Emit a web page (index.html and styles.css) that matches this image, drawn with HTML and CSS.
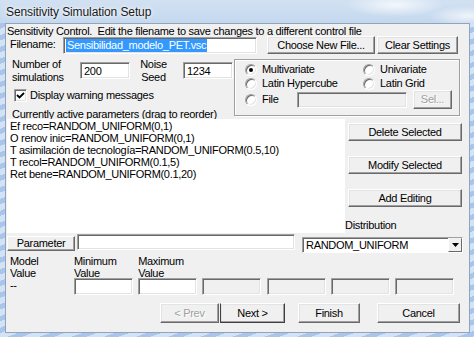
FILE: index.html
```html
<!DOCTYPE html>
<html lang="en">
<head>
  <meta charset="UTF-8" />
  <link rel="stylesheet" href="styles.css">
</head>
<body>

<div class="window">
  <div class="titlebar">Sensitivity Simulation Setup</div>

  <div class="client">

    <!-- File header -->
    <div class="intro">Sensitivity Control.&nbsp; Edit the filename to save changes to a different control file</div>
    <div class="file-row">
      <span class="file-label">Filename:</span>
      <div class="edit file-edit"><span class="selected">Sensibilidad_modelo_PET.vsc</span></div>
      <button class="btn choose-btn">Choose New File...</button>
      <button class="btn clear-btn">Clear Settings</button>
    </div>

    <!-- Simulation options -->
    <div class="options">
      <div class="options-left">
        <div class="sim-row">
          <span class="sim-label">Number of<br>simulations</span>
          <div class="edit num-edit">200</div>
          <span class="seed-label">Noise<br>Seed</span>
          <div class="edit num-edit">1234</div>
        </div>
        <div class="check-row">
          <span class="checkbox">
            <svg width="9" height="9" viewBox="0 0 9 9"><path d="M1 4 L3.5 6.5 L8 2" fill="none" stroke="#000" stroke-width="1.8"/></svg>
          </span>
          Display warning messages
        </div>
        <div class="list-caption">Currently active parameters (drag to reorder)</div>
      </div>

      <div class="method-group">
        <div class="radio-row">
          <span class="radio-item first-col"><span class="radio checked"></span>Multivariate</span>
          <span class="radio-item"><span class="radio"></span>Univariate</span>
        </div>
        <div class="radio-row">
          <span class="radio-item first-col"><span class="radio"></span>Latin Hypercube</span>
          <span class="radio-item"><span class="radio"></span>Latin Grid</span>
        </div>
        <div class="radio-row file-radio">
          <span class="radio-item file-item"><span class="radio"></span>File</span>
          <div class="edit disabled method-file"></div>
          <button class="btn sel-btn" disabled>Sel...</button>
        </div>
      </div>
    </div>

    <!-- Parameter list -->
    <div class="list-area">
      <div class="listbox">
        <div>Ef reco=RANDOM_UNIFORM(0,1)</div>
        <div>O renov inic=RANDOM_UNIFORM(0,1)</div>
        <div>T asimilación de tecnología=RANDOM_UNIFORM(0.5,10)</div>
        <div>T recol=RANDOM_UNIFORM(0.1,5)</div>
        <div>Ret bene=RANDOM_UNIFORM(0.1,20)</div>
      </div>
      <div class="list-actions">
        <button class="btn action-btn">Delete Selected</button>
        <button class="btn action-btn">Modify Selected</button>
        <button class="btn action-btn">Add Editing</button>
        <div class="dist-label">Distribution</div>
      </div>
    </div>

    <!-- Editing row -->
    <div class="param-row">
      <div class="header-btn">Parameter</div>
      <div class="edit param-edit"></div>
      <div class="combo">
        <span class="combo-text">RANDOM_UNIFORM</span>
        <span class="combo-arrow">
          <svg width="7" height="4" viewBox="0 0 7 4"><path d="M0 0 H7 L3.5 4 Z" fill="#000"/></svg>
        </span>
      </div>
    </div>

    <div class="values">
      <div class="val-label">Model<br>Value</div>
      <div class="val-label">Minimum<br>Value</div>
      <div class="val-label">Maximum<br>Value</div>
      <div></div><div></div><div></div><div></div>
      <div class="val-dash">--</div>
      <div class="edit val-edit"></div>
      <div class="edit val-edit"></div>
      <div class="edit val-edit disabled"></div>
      <div class="edit val-edit disabled"></div>
      <div class="edit val-edit disabled"></div>
      <div class="edit val-edit disabled"></div>
    </div>

    <!-- Wizard buttons -->
    <div class="nav">
      <button class="btn nav-btn prev-btn" disabled>&lt; Prev</button>
      <button class="btn nav-btn next-btn">Next &gt;</button>
      <button class="btn nav-btn finish-btn">Finish</button>
      <button class="btn nav-btn cancel-btn">Cancel</button>
    </div>

  </div>
</div>

</body>
</html>
```

FILE: styles.css
```css
/* Page setup */
html, body {
  margin: 0;
  padding: 0;
  font-family: "Liberation Sans", Arial, sans-serif;
  font-size: 11px;
  letter-spacing: -0.3px;
  color: #000;
}

/* Aero window frame */
.window {
  width: 474px;
  height: 337px;
  box-sizing: border-box;
  padding: 0 4px 4px 5px;
  display: flex;
  flex-direction: column;
  background:
    repeating-linear-gradient(160deg, #a9c6ea 0 5px, #d3e2f4 5px 11px);
}

.titlebar {
  height: 23px;
  box-sizing: border-box;
  margin: 0 -4px 0 -5px;
  padding: 5px 0 0 6px;
  font-size: 12px;
  line-height: 14px;
  letter-spacing: -0.1px;
  color: #1a1a1a;
  text-shadow: 0 0 6px #fff, 0 0 3px #fff;
  background:
    radial-gradient(ellipse 50px 12px at 395px 5px, rgba(255,255,255,0.75), rgba(255,255,255,0)),
    radial-gradient(ellipse 40px 10px at 468px 16px, rgba(255,255,255,0.7), rgba(255,255,255,0)),
    linear-gradient(180deg, #d2e1f2, #c4d8ee);
}

.client {
  flex: 1;
  background: #f0f0f0;
  border: 1px solid #8fa4bd;
  display: flex;
  flex-direction: column;
}

/* Classic controls */
.edit {
  box-sizing: border-box;
  background: #fff;
  border: 1px solid;
  border-color: #a0a0a0 #fff #fff #a0a0a0;
  box-shadow: inset 1px 1px #696969, inset -1px -1px #e3e3e3;
  padding: 1px 0 0 3px;
  line-height: 15px;
}

.edit.disabled {
  background: #f0f0f0;
}

.btn {
  box-sizing: border-box;
  font: inherit;
  letter-spacing: inherit;
  color: #000;
  background: #f0f0f0;
  border: 1px solid;
  border-color: #fff #696969 #696969 #fff;
  box-shadow: inset -1px -1px #a0a0a0, inset 1px 1px #e3e3e3;
  padding: 0;
  margin: 0;
}

.btn:disabled {
  color: #a0a0a0;
  text-shadow: 1px 1px #fff;
}

/* Header */
.intro {
  height: 11px;
  padding: 1px 0 0 1px;
  line-height: 13px;
  white-space: nowrap;
}

.file-row {
  display: flex;
  align-items: flex-start;
  height: 18px;
}

.file-label {
  margin: 2px 0 0 4px;
  width: 53px;
  line-height: 13px;
}

.file-edit {
  margin-top: 1px;
  width: 194px;
  height: 17px;
  padding: 1px 0 0 2px;
  line-height: 13px;
}

.selected {
  display: inline-block;
  background: #3399ff;
  color: #fff;
  padding: 0 1px;
  line-height: 13px;
}

.choose-btn { margin-left: 10px; width: 108px; height: 18px; }
.clear-btn { margin-left: 2px; width: 81px; height: 18px; }

/* Options */
.options {
  display: flex;
  margin-top: 5px;
  height: 60px;
}

.options-left {
  width: 228px;
  display: flex;
  flex-direction: column;
}

.sim-row {
  display: flex;
  align-items: flex-start;
  margin-top: -1px;
  height: 26px;
  line-height: 13px;
}

.sim-label { margin-left: 6px; width: 68px; }

.seed-label {
  margin: 0 8px 0 2px;
  width: 43px;
  text-align: center;
}

.num-edit {
  margin-top: 4px;
  width: 50px;
  height: 17px;
}

.check-row {
  display: flex;
  align-items: center;
  margin: 5px 0 0 8px;
  height: 13px;
  line-height: 13px;
}

.checkbox {
  box-sizing: border-box;
  width: 13px;
  height: 13px;
  margin-right: 3px;
  background: #fff;
  border: 1px solid;
  border-color: #a0a0a0 #fff #fff #a0a0a0;
  box-shadow: inset 1px 1px #696969, inset -1px -1px #e3e3e3;
  display: flex;
  align-items: center;
  justify-content: center;
}

.list-caption {
  margin: 6px 0 0 6px;
  height: 11px;
  line-height: 13px;
  white-space: nowrap;
}

/* Method group box */
.method-group {
  box-sizing: border-box;
  width: 226px;
  height: 57px;
  border: 1px solid #a0a0a0;
  box-shadow: inset 1px 1px #fff, 1px 1px #fff;
  padding: 3px 0 0 10px;
}

.radio-row {
  display: flex;
  align-items: center;
  height: 13px;
  line-height: 13px;
  margin-bottom: 1px;
}

.file-radio {
  height: 19px;
  margin-top: -1px;
}

.radio-item {
  display: flex;
  align-items: center;
  white-space: nowrap;
}

.first-col { width: 118px; }
.file-item { width: 52px; }

.radio {
  box-sizing: border-box;
  width: 12px;
  height: 12px;
  margin-right: 5px;
  border-radius: 50%;
  background: #fff;
  border: 1px solid;
  border-color: #a0a0a0 #fff #fff #a0a0a0;
  box-shadow: inset 1px 1px #696969, inset -1px -1px #e3e3e3;
  display: flex;
  align-items: center;
  justify-content: center;
}

.radio.checked::after {
  content: "";
  width: 4px;
  height: 4px;
  border-radius: 50%;
  background: #000;
}

.method-file { width: 110px; height: 16px; }

.sel-btn {
  margin-left: 6px;
  width: 39px;
  height: 19px;
}

/* Parameter list */
.list-area {
  display: flex;
  height: 114px;
}

.listbox {
  margin-left: 1px;
  width: 338px;
  background: #fff;
  padding: 1px 0 0 3px;
  box-sizing: border-box;
  line-height: 12px;
  white-space: nowrap;
}

.list-actions {
  margin-left: 3px;
  width: 114px;
  display: flex;
  flex-direction: column;
}

.action-btn { height: 18px; margin-top: 15px; }
.action-btn:first-child { margin-top: 4px; }

.dist-label {
  margin: 12px 0 0 -3px;
  line-height: 13px;
}

/* Editing row */
.param-row {
  display: flex;
  align-items: flex-start;
  height: 20px;
}

.header-btn {
  box-sizing: border-box;
  margin: 3px 0 0 1px;
  width: 68px;
  height: 15px;
  text-align: center;
  line-height: 13px;
  border: 1px solid;
  border-color: #fff #696969 #696969 #fff;
  box-shadow: inset -1px -1px #a0a0a0;
}

.param-edit {
  margin: 1px 0 0 2px;
  width: 218px;
  height: 16px;
}

.combo {
  box-sizing: border-box;
  margin: 4px 0 0 7px;
  width: 161px;
  height: 16px;
  display: flex;
  background: #fff;
  border: 1px solid;
  border-color: #a0a0a0 #fff #fff #a0a0a0;
  box-shadow: inset 1px 1px #696969;
}

.combo-text {
  flex: 1;
  padding: 1px 0 0 3px;
  line-height: 13px;
}

.combo-arrow {
  box-sizing: border-box;
  width: 14px;
  height: 14px;
  background: #f0f0f0;
  border: 1px solid;
  border-color: #f0f0f0 #696969 #696969 #fff;
  display: flex;
  align-items: center;
  justify-content: center;
}

/* Value boxes */
.values {
  display: grid;
  grid-template-columns: 58.8px repeat(6, 59px);
  grid-template-rows: 23px 17px;
  column-gap: 5.2px;
  margin-top: 2px;
  padding-left: 4px;
  line-height: 12px;
}

.val-dash { margin-top: 1px; }
.val-edit { height: 17px; }

/* Wizard buttons */
.nav {
  display: flex;
  margin-top: 8px;
}

.nav-btn { height: 20px; }
.prev-btn { margin-left: 154px; width: 59px; }
.next-btn { margin-left: 1px; width: 65px; border-color: #fff #404040 #404040 #404040; }
.finish-btn { margin-left: 13px; width: 62px; }
.cancel-btn { margin-left: 17px; width: 83px; }
```
